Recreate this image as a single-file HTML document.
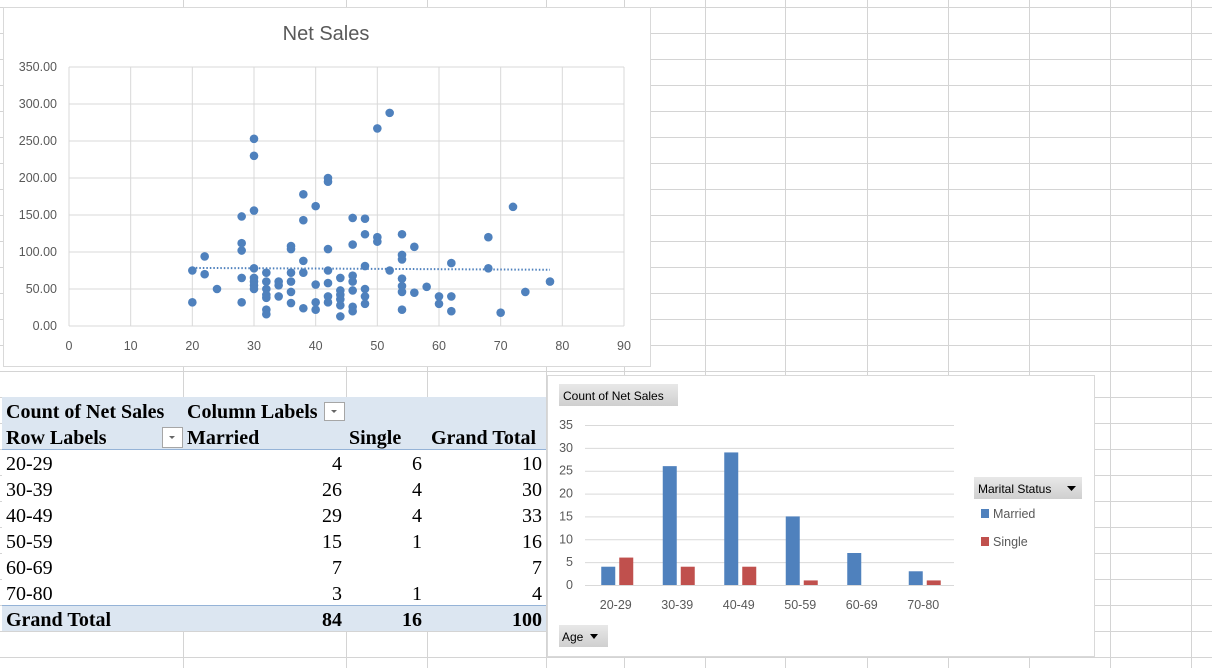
<!DOCTYPE html>
<html><head><meta charset="utf-8"><style>
html,body{margin:0;padding:0;background:#fff;width:1212px;height:668px;overflow:hidden}
svg{display:block}
.c{font-family:"Liberation Sans",sans-serif}
.t{font-family:"Liberation Serif",serif;font-size:20px;fill:#000}
.b{font-weight:bold}
</style></head><body>
<svg id="s" width="1212" height="668" xmlns="http://www.w3.org/2000/svg">
<g id="grid" stroke="#d4d4d4" stroke-width="1"></g>
<rect x="3.5" y="7.5" width="647" height="359" fill="#fff" stroke="#d9d9d9"/>
<text x="326" y="40" text-anchor="middle" class="c" font-size="20" fill="#595959">Net Sales</text>
<g id="sc"></g>
<rect x="2" y="397" width="544" height="52" fill="#dce6f1"/>
<rect x="2" y="449" width="544" height="156" fill="#fff"/>
<rect x="2" y="605" width="544" height="26" fill="#dce6f1"/>
<line x1="2" y1="449.5" x2="546" y2="449.5" stroke="#95b3d7"/>
<line x1="2" y1="605.5" x2="546" y2="605.5" stroke="#95b3d7"/>
<g class="t b">
<text x="6" y="418">Count of Net Sales</text>
<text x="187" y="418">Column Labels</text>
<text x="6" y="444">Row Labels</text>
<text x="187" y="444">Married</text>
<text x="349" y="444">Single</text>
<text x="431" y="444">Grand Total</text>
<text x="6" y="626">Grand Total</text>
<text x="342" y="626" text-anchor="end">84</text>
<text x="422" y="626" text-anchor="end">16</text>
<text x="542" y="626" text-anchor="end">100</text>
</g>
<rect x="324.5" y="402.5" width="20" height="18" fill="#fff" stroke="#a6a6a6"/>
<path d="M331 410h6l-3 3z" fill="#666"/>
<rect x="162.5" y="427.5" width="20" height="20" fill="#fff" stroke="#a6a6a6"/>
<path d="M169 436h6l-3 3z" fill="#666"/>
<g class="t" id="pv"></g>
<rect x="547.5" y="375.5" width="547" height="281" fill="#fff" stroke="#d9d9d9"/>
<defs><linearGradient id="gb" x1="0" y1="0" x2="0" y2="1"><stop offset="0" stop-color="#e8e8e8"/><stop offset="1" stop-color="#cfcfcf"/></linearGradient></defs>
<rect x="559" y="384" width="119" height="22" fill="url(#gb)"/>
<text x="563" y="400" class="c" font-size="12" fill="#000">Count of Net Sales</text>
<rect x="559" y="625" width="49" height="22" fill="url(#gb)"/>
<text x="562" y="641" class="c" font-size="12" fill="#000">Age</text>
<path d="M590 634h8l-4 5z" fill="#000"/>
<rect x="974" y="477" width="108" height="22" fill="url(#gb)"/>
<text x="978" y="493" class="c" font-size="12" fill="#000">Marital Status</text>
<path d="M1067 486h9l-4.5 5z" fill="#000"/>
<rect x="981" y="509" width="8" height="9" fill="#4f81bd"/>
<text x="993" y="518" class="c" font-size="12.5" fill="#595959">Married</text>
<rect x="981" y="537" width="8" height="9" fill="#c0504d"/>
<text x="993" y="546" class="c" font-size="12.5" fill="#595959">Single</text>
<g id="bc"></g>
</svg>
<script>
var NS="http://www.w3.org/2000/svg";
function el(p,t,a,txt){var e=document.createElementNS(NS,t);for(var k in a)e.setAttribute(k,a[k]);if(txt!==undefined)e.textContent=txt;p.appendChild(e);return e;}
var g=document.getElementById('grid');
[183,346,427,546,624,705,785,867,948,1029,1110,1191].forEach(function(x){el(g,'line',{x1:x+.5,y1:0,x2:x+.5,y2:668});});
for(var y=7;y<668;y+=26)el(g,'line',{x1:0,y1:y+.5,x2:1212,y2:y+.5});
var sc=document.getElementById('sc');
function X(a){return 69+a*555/90;} function Y(v){return 326-v*259/350;}
for(var i=0;i<=9;i++){el(sc,'line',{x1:X(i*10),y1:67,x2:X(i*10),y2:326,stroke:'#d9d9d9'});
 el(sc,'text',{x:X(i*10),y:350,'text-anchor':'middle','class':'c','font-size':'12.5',fill:'#595959'},String(i*10));}
for(var j=0;j<=7;j++){var v=j*50;el(sc,'line',{x1:69,y1:Y(v),x2:624,y2:Y(v),stroke:'#d9d9d9'});
 el(sc,'text',{x:57,y:Y(v)+4,'text-anchor':'end','class':'c','font-size':'12.5',fill:'#595959'},v.toFixed(2));}
var D={20:[75,32],22:[94,70],24:[50],28:[148,112,102,65,32],30:[253,230,156,78,65,60,55,50],32:[72,60,50,42,38,22,16],34:[60,55,40],36:[108,104,72,60,46,31],38:[178,143,88,72,24],40:[162,56,32,22],42:[200,195,104,75,58,40,32],44:[65,48,42,36,28,13],46:[146,110,68,60,48,26,20],48:[145,124,81,50,40,30],50:[267,120,114],52:[288,75],54:[124,96,90,64,54,46,22],56:[107,45],58:[53],60:[40,30],62:[85,40,20],68:[120,78],70:[18],72:[161],74:[46],78:[60]};
for(var a in D)D[a].forEach(function(v){el(sc,'circle',{cx:X(+a),cy:Y(v),r:4.3,fill:'#4f81bd'});});
el(sc,'line',{x1:X(20),y1:Y(78.5),x2:X(78),y2:Y(76),stroke:'#4f81bd','stroke-width':2,'stroke-dasharray':'1.5 2'});
var pv=document.getElementById('pv');
var R=[["20-29","4","6","10"],["30-39","26","4","30"],["40-49","29","4","33"],["50-59","15","1","16"],["60-69","7","","7"],["70-80","3","1","4"]];
R.forEach(function(r,i){var yy=470+i*26;el(pv,'text',{x:6,y:yy},r[0]);el(pv,'text',{x:342,y:yy,'text-anchor':'end'},r[1]);el(pv,'text',{x:422,y:yy,'text-anchor':'end'},r[2]);el(pv,'text',{x:542,y:yy,'text-anchor':'end'},r[3]);});
var bc=document.getElementById('bc');
function BY(v){return 585-v*160/35;}
for(var k=0;k<=7;k++){var v=k*5;el(bc,'line',{x1:585,y1:BY(v)+.5,x2:954,y2:BY(v)+.5,stroke:'#d9d9d9'});
 el(bc,'text',{x:573,y:BY(v)+4,'text-anchor':'end','class':'c','font-size':'12.5',fill:'#595959'},String(v));}
var cats=["20-29","30-39","40-49","50-59","60-69","70-80"],M=[4,26,29,15,7,3],S=[6,4,4,1,0,1];
cats.forEach(function(c,i){var cx=585+61.5*(i+.5);
 el(bc,'rect',{x:cx-14.5,y:BY(M[i]),width:14,height:M[i]*160/35,fill:'#4f81bd'});
 if(S[i])el(bc,'rect',{x:cx+3.5,y:BY(S[i]),width:14,height:S[i]*160/35,fill:'#c0504d'});
 el(bc,'text',{x:cx,y:609,'text-anchor':'middle','class':'c','font-size':'12.5',fill:'#595959'},c);});
</script>
</body></html>
